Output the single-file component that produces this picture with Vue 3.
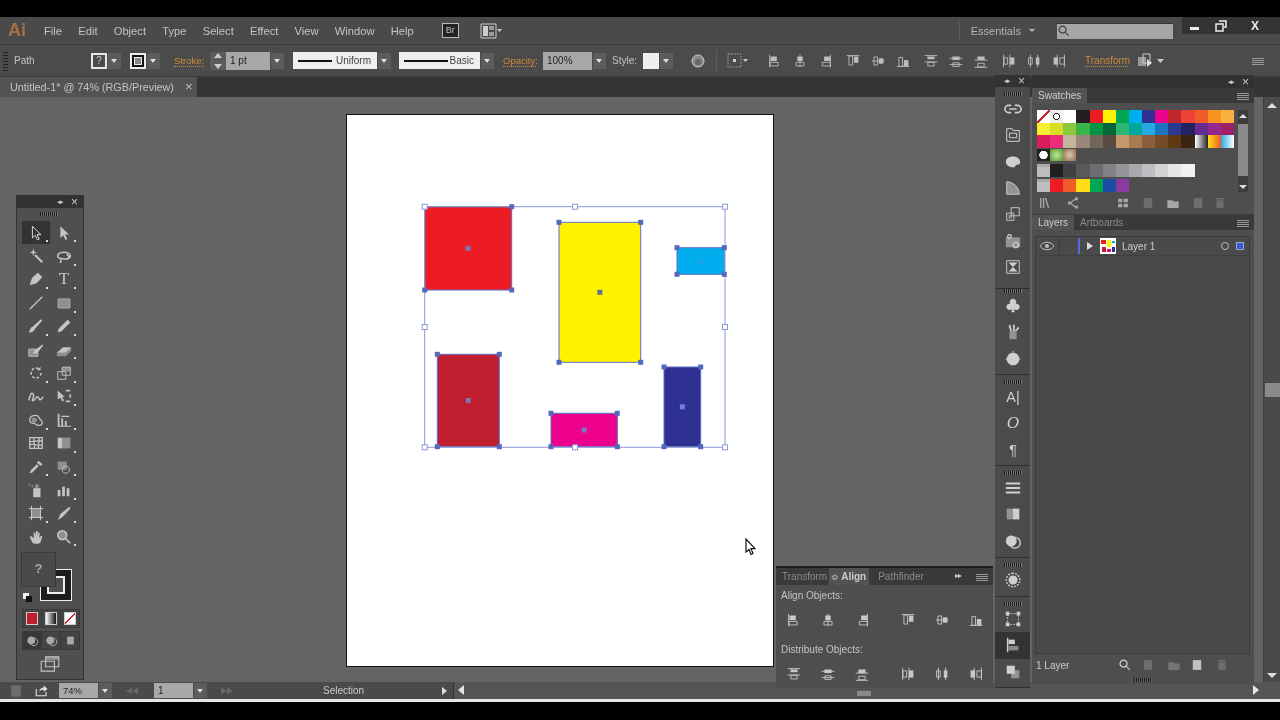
<script setup>
import { h } from 'vue'

const icons = {
  sel: { s: 'M6 2.5v13l3.2-3 2.4 5.2 2-.9-2.4-5h4.3z' },
  direct: { f: 'M6 2.5v13l3.2-3 2.4 5.2 2-.9-2.4-5h4.3z' },
  wand: { f: 'M7 2l1 3 3 1-3 1-1 3-1-3-3-1 3-1z', s: 'M9 9l8 8', w: 2.4 },
  lasso: { s: 'M3 10c0-5 14-6 14 0 0 3-5 4-8 3M3 10c0 2 3 3 6 3M7 13l-1 5M13 8l3 3-3 3', w: 1.7 },
  pen: { f: 'M3 17l2.5-8L12 3l5 5-6 6.5z', f2: 'M9 7l4 4-2 1-3-3z' },
  type: { t: 'T', tf: 'Liberation Serif', ts: 19 },
  line: { s: 'M3 17L17 3', w: 1.4 },
  rect: { s: 'M3.5 5.5h13v10h-13z', f2: 'M4 6h12v9H4z' },
  brush: { f: 'M2 17c3 .5 6-1 7-4l8-9-1.5-1.5-9 8c-3 1-3 4-4.500 6.500z' },
  pencil: { f: 'M3 17l1-4L14 3l3 3L7 16z', f2: 'M14 3l3 3-1 1-3-3z' },
  blob: { f2: 'M2 9h10v8H2z', s: 'M2 9h10v8H2z', f: 'M6 14l2-3 9-7 1 1-7 9z' },
  eraser: { f: 'M2 13l7-6h9l-6 6z', f2: 'M2 13h10v4H2zM12 13l6-6v4l-6 6z' },
  rotate: { s: 'M15.500 10a5.500 5.500 0 1 1-2-4.200', d: '3 2', w: 1.7, f: 'M15 3v4h-4z' },
  scale: { s: 'M3 8.500h9v8.500H3zM8 3.500h9v9H8z', f2: 'M8 3.500h9v5h-9z' },
  width: { s: 'M2 15c2-7 3-10 5-7s-3 8 0 7 3-5 5-4 1 4 3 3 2-3 3-3', w: 1.7 },
  free: { f: 'M3 4v10l3-2 2 4 2-1-2-4h3z', s: 'M12 4h5M17 8v4M12 16h5', w: 1.8 },
  shape: { s: 'M3 10c0-6 9-6 10-3s4 3 4 6-5 4-7 2-7 0-7-5z', w: 1.4, f2: 'M5 10c0-3 5-3 6-1s-1 4-3 4-3-1-3-3z' },
  chart: { f: 'M3 3h2v14H3zM7 8h2v9H7zM11 11h2v6h-2z', s: 'M3 17h15M7 6h9', w: 1.2 },
  mesh: { s: 'M3 4h14v12H3zM3 8c4 2 9-2 14 0M3 12c4-2 9 2 14 0M8 4c-2 4 2 8 0 12M13 4c2 4-2 8 0 12', w: 1.4 },
  grad: { f: 'M3 4h5v12H3z', f2: 'M8 4h9v12H8z' },
  drop: { f: 'M3 17l1-3 7-7 2 2-7 7zM11 5l2-2 4 4-2 2z' },
  blend: { s: 'M12 9a4 4 0 1 0 .100 0z', f2: 'M3 4h10v9H3z' },
  spray: { f: 'M7 8h8v10H7z', f2: 'M9 4h4v4H9zM2 3h2v2H2zM5 5h2v2H5z' },
  bars: { f: 'M3 10h3v7H3zM8 6h3v11H8zM13 8h3v9h-3z' },
  crop: { s: 'M5 2v16M15 2v16M2 5h16M2 15h16', w: 1.2, f2: 'M5 5h10v10H5z' },
  slice: { f: 'M3 18l3-7 10-8 1 2-8 9z' },
  hand: { f: 'M5 9l-2 1 3 6c1 2 8 2 9 0l2-7-2 0-1 3V5h-1.500l-.500 5V3.500h-2L9 10V5H7.500v7z' },
  zoom: { f2: 'M8 3a5 5 0 1 0 .100 0z', s: 'M11.500 11.500L17 17M8 3a5 5 0 1 0 .100 0z', w: 1.8 },
  screen: { s: 'M6 3.500h12v9H6zM2 7.500h12v9H2z', f2: 'M6 3.500h12v3H6z' },
  link: { s: 'M8 6H5a4 4 0 0 0 0 8h3M12 6h3a4 4 0 0 1 0 8h-3M6 10h8', w: 1.8 },
  folder: { s: 'M3 3h6l1 2h7v12H3zM6 8h8v5H6z', w: 1.1 },
  palette: { f: 'M10 4c5 0 8 2.500 8 6s-3 3-4 3-1 3-4 3-8-2-8-6 4-6 8-6z' },
  curve: { f2: 'M3 17V3c7 0 14 6 14 14z', s: 'M3 17V3c7 0 14 6 14 14z' },
  trans: { s: 'M8 3h9v9H8zM3 9h8v8H3z', f2: 'M5 11h4v4H5z' },
  camera: { f2: 'M2 6h16v11H2z', s: 'M13 11.500a3 3 0 1 0 .100 0zM6 3a2 2 0 1 0 .100 0z', w: 1.4 },
  frame: { s: 'M3 3h14v14H3z', f: 'M5 5h10l-5 5zM5 15h10l-5-5z' },
  club: { f: 'M10 2a3.500 3.500 0 0 1 3 5.500 3.500 3.500 0 1 1-2 5.500l1 4H8l1-4a3.500 3.500 0 1 1-2-5.500A3.500 3.500 0 0 1 10 2z' },
  jar: { f2: 'M6 9h8v9H6z', f: 'M7 9L5 3l2-1 2 7zM10 9V2h2v7zM12 9l4-5 1 2-3 3z' },
  sphere: { f: 'M10 3a7 7 0 1 0 .100 0z', f2: 'M2 9h2v2H2zM16 9h2v2h-2zM9 1h2v2H9z' },
  charA: { t: 'A|', tf: 'Liberation Sans', ts: 16 },
  charO: { t: 'O', tf: 'Liberation Serif', ts: 19, ti: true },
  para: { t: '¶', tf: 'Liberation Sans', ts: 16 },
  lines: { f: 'M2 4h16v2H2zM2 9h16v2H2zM2 14h16v2H2z' },
  gradp: { f: 'M10 4h7v12h-7z', f2: 'M3 4h7v12H3z' },
  blobs: { f: 'M8 4a6 6 0 1 0 .100 0z', s: 'M12 6a6 6 0 1 0 .100 0z', w: 1.5 },
  dots: { s: 'M10 2.500a7.500 7.500 0 1 0 .100 0z', d: '2 1.500', w: 1.6, f: 'M10 5a5 5 0 1 0 .100 0z' },
  board: { s: 'M4 4h12v12H4z', f: 'M2 2h4v4H2zM14 2h4v4h-4zM2 14h4v4H2zM14 14h4v4h-4z', d: '2 1.500' },
  alignp: { s: 'M4 2v16', w: 1.6, f: 'M5 4h7v5H5z', f2: 'M5 11h11v5H5z' },
  path: { f: 'M3 3h9v9H3z', f2: 'M8 8h9v9H8z' },
  alL: { s: 'M4 3v14M4.500 11.500h9v4h-9z', f: 'M5 5h7v5H5z' },
  alC: { s: 'M10 3v14M5.500 11.500h9v4h-9z', f: 'M7 5h6v5H7z' },
  alR: { s: 'M16 3v14M7 11.500h9v4H7z', f: 'M9 5h7v5H9z' },
  alT: { s: 'M3 4h14M5.500 4.500h4v10h-4z', f: 'M11 5h5v7h-5z' },
  alM: { s: 'M3 10h14M5.500 5.500h4v9h-4z', f: 'M11 7h5v6h-5z' },
  alB: { s: 'M3 16h14M5.500 6h4v10h-4z', f: 'M11 9h5v7h-5z' },
  diT: { s: 'M3 4h14M3 11h14M6.500 11.500h7v4h-7z', f: 'M6 5h8v3H6z' },
  diM: { s: 'M3 7h14M3 14h14M6.500 12h7v4h-7z', f: 'M6 5h8v4H6z' },
  diB: { s: 'M3 9h14M3 17h14M6.500 12.500h7v4h-7z', f: 'M6 5h8v4H6z' },
  dhL: { s: 'M4 3v14M11 3v14M4.500 6.500h4v7h-4z', f: 'M11 6h5v8h-5z' },
  dhC: { s: 'M6 3v14M14 3v14M4 6.500h4v7H4z', f: 'M12 6h4v8h-4z' },
  dhR: { s: 'M8 3v14M16 3v14M11 6.500h5v7h-5z', f: 'M4 6h5v8H4z' },
  search: { s: 'M8 3a5 5 0 1 1-.100 0zM11.500 11.500L17 17', w: 1.6 },
  page: { f: 'M4 3h12v14H4z' },
  trash: { f: 'M5 6h10v11H5zM4 3h12v2H4z' },
  loc: { f: 'M2 6h7l2 2h7v9H2z' },
  libs: { f: 'M3 3h2v14H3zM7 3h2v14H7z', s: 'M11 3l4 14', w: 2 },
  share: { s: 'M14 4l-8 6 8 6', w: 1.6, f: 'M3 8h4v4H3zM13 2h4v4h-4zM13 14h4v4h-4z' },
  grid4: { f: 'M3 4h6v5H3zM11 4h6v5h-6zM3 11h6v5H3zM11 11h6v5h-6z' },
  export: { s: 'M3 8v9h13v-5', w: 1.5, f: 'M7 12c0-4 3-6 6-6V3l5 5-5 4V9c-3 0-5 1-6 3z' }
}

const Ico = (props) => {
  const ic = icons[props.name]
  const size = props.size || 20
  const parts = []
  if (ic.f2) parts.push(h('path', { d: ic.f2, fill: 'currentColor', opacity: 0.55 }))
  if (ic.f) parts.push(h('path', { d: ic.f, fill: 'currentColor' }))
  if (ic.s) parts.push(h('path', { d: ic.s, fill: 'none', stroke: 'currentColor', 'stroke-width': ic.w || 1, 'stroke-dasharray': ic.d }))
  if (ic.t) {
    parts.push(h('text', {
      x: 10, y: 16, 'text-anchor': 'middle', fill: 'currentColor',
      'font-family': ic.tf, 'font-size': ic.ts, 'font-style': ic.ti ? 'italic' : 'normal'
    }, ic.t))
  }
  return h('svg', { viewBox: '0 0 20 20', width: size, height: size }, parts)
}
Ico.props = ['name', 'size']

const menus = ['File', 'Edit', 'Object', 'Type', 'Select', 'Effect', 'View', 'Window', 'Help']

const alignBar = [
  ['alL', 'alC', 'alR'],
  ['alT', 'alM', 'alB'],
  ['diT', 'diM', 'diB'],
  ['dhL', 'dhC', 'dhR']
]

const tools = [
  'sel', 'direct', 'wand', 'lasso', 'pen', 'type', 'line', 'rect', 'brush', 'pencil', 'blob', 'eraser',
  'rotate', 'scale', 'width', 'free', 'shape', 'chart', 'mesh', 'grad', 'drop', 'blend', 'spray', 'bars',
  'crop', 'slice', 'hand', 'zoom'
]

const dockGroups = [
  ['link', 'folder', 'palette', 'curve', 'trans', 'camera', 'frame'],
  ['club', 'jar', 'sphere'],
  ['charA', 'charO', 'para'],
  ['lines', 'gradp', 'blobs'],
  ['dots'],
  ['board', 'alignp', 'path']
]

const swatchRows = [
  ['none', 'reg', '#ffffff', '#231f20', '#ed1c24', '#fff200', '#00a651', '#00aeef', '#2e3192', '#ec008c', '#c1272d', '#ef4136', '#f15a29', '#f7941d', '#fbb040'],
  ['#f9ed32', '#d7df23', '#8dc63f', '#39b54a', '#009444', '#006838', '#2bb673', '#00a79d', '#27aae1', '#1c75bc', '#2b3990', '#262262', '#662d91', '#92278f', '#9e1f63'],
  ['#da1c5c', '#ee2a7b', '#c2b59b', '#9b8579', '#726658', '#594a42', '#c49a6c', '#a97c50', '#8b5e3c', '#754c29', '#603913', '#3c2415', 'linear-gradient(90deg,#fff,#222)', 'linear-gradient(90deg,#ffde17,#f15a29)', 'linear-gradient(90deg,#27aae1,#fff)'],
  ['radial-gradient(circle,#fff 45%,#222 50%)', 'radial-gradient(circle,#c8e6a0,#4c9a2a)', 'radial-gradient(circle,#e0c8b0,#8a6a50)'],
  ['folder', '#231f20', '#414042', '#58595b', '#6d6e71', '#808285', '#939598', '#a7a9ac', '#bcbec0', '#d1d3d4', '#e6e7e8', '#f1f2f2'],
  ['folder', '#ed1c24', '#f15a29', '#ffde17', '#00a651', '#1c4da1', '#8a3b9f']
]

const swatchFoot = ['libs', 'share', 'grid4', 'page', 'loc', 'page', 'trash']
const layerFoot = ['search', 'page', 'loc', 'page', 'trash']

const shapes = [
  { x: 424.7, y: 206.7, w: 87, h: 83.3, c: '#ed1c24', dot: '#7c74b4' },
  { x: 559, y: 222.3, w: 81.7, h: 140, c: '#fff200', dot: '#5f6f9c' },
  { x: 677, y: 247.7, w: 47.3, h: 26.6, c: '#00aeef', dot: '#1ea4e6' },
  { x: 437.3, y: 354.3, w: 62, h: 92.4, c: '#be1e2d', dot: '#7c74b4' },
  { x: 551, y: 413.3, w: 66.3, h: 33.4, c: '#ec008c', dot: '#7c74c4' },
  { x: 664, y: 367, w: 36.7, h: 79.7, c: '#2e3192', dot: '#6f80d8' }
]

const handles = [
  [424.7, 206.7], [575, 206.7], [725, 206.7], [424.7, 327], [725, 327], [424.7, 447.3], [575, 447.3], [725, 447.3]
]

const corners = (s) => [[s.x, s.y], [s.x + s.w, s.y], [s.x, s.y + s.h], [s.x + s.w, s.y + s.h]]
</script>

<template>
  <div class="screen">
    <div class="blackbar"></div>

    <header class="menubar">
      <span class="ai-logo">Ai</span>
      <nav class="menus">
        <span v-for="m in menus" :key="m">{{ m }}</span>
      </nav>
      <span class="br-box">Br</span>
      <svg class="arrange" width="22" height="16" viewBox="0 0 22 16">
        <path d="M1 1h15v14H1z" fill="none" stroke="#ccc" />
        <path d="M3 3h5v10H3z" fill="#ccc" /><path d="M9 3h5v4H9zM9 9h5v4H9z" fill="#999" />
        <path d="M17 6h5l-2.500 3z" fill="#ccc" />
      </svg>
      <span class="bar-sep"></span>
      <span class="essentials">Essentials</span>
      <span class="tri-sm"></span>
      <div class="searchbox"><Ico name="search" :size="14" /></div>
      <div class="winctl">
        <span class="win-min"></span>
        <svg width="12" height="12" viewBox="0 0 12 12"><path d="M4 1h7v6H9M1 4h7v7H1z" fill="none" stroke="#eee" stroke-width="1.500" /></svg>
        <span class="win-x">X</span>
      </div>
    </header>

    <div class="controlbar">
      <span class="grip-v"></span>
      <span class="path-label">Path</span>
      <span class="fill-box">?</span><span class="drop"></span>
      <span class="stroke-box"><i></i></span><span class="drop"></span>
      <span class="link-label stroke-label">Stroke:</span>
      <span class="spinner"></span>
      <span class="input w43">1 pt</span><span class="drop"></span>
      <span class="line-sel uniform"><i></i>Uniform</span><span class="drop"></span>
      <span class="line-sel basic"><i></i>Basic</span><span class="drop"></span>
      <span class="link-label opacity-label">Opacity:</span>
      <span class="input w49">100%</span><span class="drop"></span>
      <span class="style-label">Style:</span>
      <span class="style-box"></span><span class="drop"></span>
      <svg class="globe" width="14" height="14" viewBox="0 0 14 14"><circle cx="7" cy="7" r="6" fill="#8a8a8a" stroke="#ccc" /><circle cx="7" cy="8" r="3" fill="#666" /></svg>
      <span class="bar-sep tall"></span>
      <svg class="refpt" width="22" height="16" viewBox="0 0 22 16"><path d="M1 1h13v13H1z" fill="none" stroke="#aaa" stroke-dasharray="1.500 1.500" /><path d="M6 6h3v3H6z" fill="#ccc" /><path d="M16 6h5l-2.500 3z" fill="#ccc" /></svg>
      <div class="align-groups">
        <div v-for="(g, i) in alignBar" :key="i" class="align-group">
          <Ico v-for="n in g" :key="n" :name="n" :size="18" />
        </div>
      </div>
      <span class="link-label transform-label">Transform</span>
      <svg class="isolate" width="28" height="16" viewBox="0 0 28 16"><path d="M1 4h8v9H1z" fill="#999" /><path d="M6 1h7v9H6z" fill="none" stroke="#ccc" /><path d="M10 6l5 4-5 4z" fill="#ddd" /><path d="M20 6h7l-3.500 4z" fill="#ccc" /></svg>
      <span class="panel-menu ctl-menu"></span>
    </div>

    <div class="tabbar">
      <div class="doc-tab">Untitled-1* @ 74% (RGB/Preview) <span class="tab-x">×</span></div>
    </div>

    <main class="workspace">
      <div class="canvas">
        <div class="artboard">
          <svg class="art" width="426" height="551" viewBox="347 115 426 551">
            <rect v-for="s in shapes" :key="s.c" :x="s.x" :y="s.y" :width="s.w" :height="s.h" :fill="s.c" stroke="#5b6ec4" stroke-width="1" />
            <rect x="424.700" y="206.700" width="300.300" height="240.600" fill="none" stroke="#8c9ad8" stroke-width="1" />
            <g v-for="s in shapes" :key="'p' + s.c" fill="#5468bc">
              <rect v-for="(p, i) in corners(s)" :key="i" :x="p[0] - 2.500" :y="p[1] - 2.500" width="5" height="5" />
              <rect :x="s.x + s.w / 2 - 2.500" :y="s.y + s.h / 2 - 2.500" width="5" height="5" :fill="s.dot" />
            </g>
            <rect v-for="(p, i) in handles" :key="'h' + i" :x="p[0] - 2.500" :y="p[1] - 2.500" width="5" height="5" fill="#fff" stroke="#8c9ad8" />
            <path d="M746 539v13l3-2.500 2 5 2-1-2-4.800h4z" fill="#fff" stroke="#111" stroke-width="1.200" />
          </svg>
        </div>
      </div>
      <div class="vscroll">
        <span class="arr-up"></span>
        <span class="vthumb"></span>
        <span class="arr-down"></span>
      </div>
    </main>

    <footer class="statusbar">
      <Ico class="st-dim first" name="page" :size="16" />
      <Ico class="st-light" name="export" :size="15" />
      <span class="input zoomval">74%</span><span class="drop st-drop"></span>
      <span class="nav-dim">◀◀</span>
      <span class="input pageval">1</span><span class="drop st-drop"></span>
      <span class="nav-dim">▶▶</span>
      <span class="st-mode">Selection</span>
      <span class="st-arrow"></span>
      <div class="hscroll">
        <span class="arr-left"></span>
        <span class="hthumb"></span>
        <span class="arr-right"></span>
      </div>
    </footer>
    <div class="whiteline"></div>

    <!-- floating panels -->
    <aside class="toolpanel">
      <div class="ph"><span class="ph-arrows">◂▸</span><span class="ph-x">×</span></div>
      <span class="grip"></span>
      <div class="toolgrid">
        <div v-for="(t, i) in tools" :key="t" class="tool" :class="{ active: i === 0, corner: i % 2 === 1 || i % 4 === 0 }">
          <Ico :name="t" :size="18" />
        </div>
      </div>
      <div class="colors">
        <div class="stroke-big"><i></i></div>
        <div class="fill-big">?</div>
        <div class="mini-default"><i></i><b></b></div>
      </div>
      <div class="btnrow">
        <span class="cbtn"><i class="c-red"></i></span>
        <span class="cbtn"><i class="c-grad"></i></span>
        <span class="cbtn"><i class="c-none"></i></span>
      </div>
      <div class="btnrow draw">
        <span class="cbtn dark"><Ico name="blobs" :size="13" /></span>
        <span class="cbtn"><Ico name="blobs" :size="13" /></span>
        <span class="cbtn"><Ico name="page" :size="11" /></span>
      </div>
      <div class="screenmode"><Ico name="screen" :size="22" /></div>
    </aside>

    <aside class="dock">
      <div class="ph"><span class="ph-arrows">◂▸</span><span class="ph-x">×</span></div>
      <div v-for="(g, i) in dockGroups" :key="i" class="dock-group" :class="'dg' + i">
        <span class="grip"></span>
        <div v-for="n in g" :key="n" class="dock-item" :class="{ on: n === 'alignp' }">
          <Ico :name="n" :size="18" />
        </div>
      </div>
    </aside>

    <aside class="rightpanel">
      <div class="ph"><span class="ph-arrows">◂▸</span><span class="ph-x">×</span></div>
      <div class="tabs">
        <span class="tab on">Swatches</span>
        <span class="panel-menu"></span>
      </div>
      <div class="swatch-body">
        <div class="swatches">
          <div v-for="(row, r) in swatchRows" :key="r" class="sw-row" :class="'r' + r">
            <span v-for="(c, i) in row" :key="i" class="sw" :class="{ none: c === 'none', reg: c === 'reg', folder: c === 'folder' }" :style="c.length > 6 || c[0] === '#' ? { background: c === 'folder' ? '' : c } : {}"></span>
          </div>
        </div>
        <div class="sw-scroll">
          <span class="arr-up sm"></span>
          <span class="sw-thumb"></span>
          <span class="arr-down sm"></span>
        </div>
      </div>
      <div class="panel-foot swfoot">
        <Ico v-for="(n, i) in swatchFoot" :key="i" :class="'sf' + i" :name="n" :size="14" />
      </div>
      <div class="tabs layers-tabs">
        <span class="tab on">Layers</span>
        <span class="tab dim">Artboards</span>
        <span class="panel-menu"></span>
      </div>
      <div class="layers">
        <div class="layer-row">
          <svg class="eye" width="16" height="10" viewBox="0 0 16 10"><path d="M1 5c3-5 11-5 14 0-3 5-11 5-14 0z" fill="none" stroke="#bbb" /><circle cx="8" cy="5" r="2" fill="#bbb" /></svg>
          <span class="lsep"></span>
          <span class="layer-color"></span>
          <span class="tri-right"></span>
          <svg class="layer-thumb" width="16" height="16" viewBox="0 0 16 16">
            <rect width="16" height="16" fill="#fff" />
            <rect x="1" y="2" width="5" height="4" fill="#ed1c24" /><rect x="7" y="2" width="4" height="7" fill="#fff200" /><rect x="12" y="3" width="3" height="2" fill="#00aeef" />
            <rect x="2" y="9" width="4" height="5" fill="#be1e2d" /><rect x="7" y="11" width="4" height="3" fill="#ec008c" /><rect x="12" y="9" width="3" height="5" fill="#2e3192" />
          </svg>
          <span class="layer-name">Layer 1</span>
          <span class="target"></span>
          <span class="sel-sq"></span>
        </div>
      </div>
      <div class="panel-foot layfoot">
        <span class="lcount">1 Layer</span>
        <Ico v-for="(n, i) in layerFoot" :key="i" :class="'lf' + i" :name="n" :size="14" />
      </div>
      <span class="grip bottom"></span>
    </aside>

    <aside class="alignpanel">
      <div class="tabs align-tabs">
        <span class="tab dim">Transform</span>
        <span class="tab on"><em>≎</em>Align</span>
        <span class="tab dim pf">Pathfinder</span>
        <span class="more">▸▸</span>
        <span class="panel-menu"></span>
      </div>
      <div class="al-title">Align Objects:</div>
      <div class="al-row">
        <div class="al-g"><Ico v-for="n in alignBar[0]" :key="n" :name="n" :size="18" /></div>
        <div class="al-g"><Ico v-for="n in alignBar[1]" :key="n" :name="n" :size="18" /></div>
      </div>
      <div class="al-title second">Distribute Objects:</div>
      <div class="al-row">
        <div class="al-g"><Ico v-for="n in alignBar[2]" :key="n" :name="n" :size="18" /></div>
        <div class="al-g"><Ico v-for="n in alignBar[3]" :key="n" :name="n" :size="18" /></div>
      </div>
    </aside>
  </div>
</template>

<style>
html, body { margin: 0; background: #000; }
</style>

<style scoped>
.screen {
  position: relative;
  width: 1280px;
  height: 720px;
  overflow: hidden;
  background: #000;
  font-family: "Liberation Sans", Arial, sans-serif;
  font-size: 10px;
  color: #c4c4c4;
  filter: blur(0.45px);
}
.blackbar { height: 17px; }

/* menu bar */
.menubar {
  height: 28px;
  box-sizing: border-box;
  display: flex;
  align-items: center;
  background: #4a4a4a;
  border-bottom: 1px solid #3a3a3a;
  position: relative;
}
.ai-logo { margin-left: 8px; width: 28px; font: bold 18px "Liberation Sans", sans-serif; color: #a8703f; }
.menus { display: flex; gap: 16.2px; margin-left: 8px; font-size: 11.2px; color: #c4c4c4; }
.br-box { margin-left: 28px; width: 15px; height: 13px; border: 1px solid #bbb; background: #222; font-size: 9px; line-height: 13px; text-align: center; }
.arrange { margin-left: 21px; }
.bar-sep { width: 1px; height: 18px; background: #5e5e5e; margin-left: 457px; }
.essentials { margin-left: 11px; font-size: 11px; color: #b4b4b4; }
.tri-sm { margin-left: 8px; border: 3px solid transparent; border-top: 3px solid #bbb; margin-top: 3px; }
.searchbox {
  margin-left: 22px;
  width: 116px;
  height: 16px;
  background: #a6a6a6;
  color: #444;
  display: flex;
  align-items: center;
  border-top: 1px solid #333;
  box-sizing: border-box;
}
.winctl {
  position: absolute;
  top: 0;
  right: 0;
  width: 98px;
  height: 17px;
  background: #333;
  display: flex;
  align-items: center;
  box-sizing: border-box;
  padding-left: 8px;
}
.win-min { width: 9px; height: 3px; background: #eee; margin-top: 6px; margin-right: 16px; }
.win-x { margin-left: 24px; font: bold 12px "Liberation Sans", sans-serif; color: #eee; }

/* control bar */
.controlbar {
  height: 32px;
  box-sizing: border-box;
  display: flex;
  align-items: center;
  background: #4b4b4b;
  border-bottom: 1px solid #3c3c3c;
  position: relative;
}
.grip-v { width: 5px; height: 20px; margin-left: 3px; background: repeating-linear-gradient(0deg, #222 0 1px, transparent 1px 3px); }
.path-label { margin-left: 6px; width: 77px; }
.fill-box {
  width: 16px; height: 16px; box-sizing: border-box;
  border: 2px solid #e8e8e8; background: #4b4b4b;
  text-align: center; line-height: 12px; font-size: 10px;
}
.drop {
  position: relative;
  width: 13px; height: 16px;
  margin-left: 1px;
  background: #5c5c5c;
  flex: none;
}
.drop::after {
  content: "";
  position: absolute;
  left: 3px; top: 6px;
  border: 3.5px solid transparent;
  border-top: 4px solid #ddd;
}
.stroke-box { width: 16px; height: 16px; box-sizing: border-box; margin-left: 9px; border: 2px solid #eee; background: #111; display: flex; align-items: center; justify-content: center; }
.stroke-box i { width: 6px; height: 6px; border: 1px solid #eee; background: #888; }
.link-label { color: #c98a3a; border-bottom: 1px dotted #c98a3a; line-height: 11px; }
.stroke-label { margin-left: 14px; width: 30px; font-size: 9.5px; }
.spinner { position: relative; margin-left: 6px; width: 16px; height: 18px; background: #5c5c5c; }
.spinner::before, .spinner::after { content: ""; position: absolute; left: 4px; border: 4px solid transparent; }
.spinner::before { top: 1px; border-top: 0; border-bottom: 5px solid #ccc; }
.spinner::after { bottom: 1px; border-bottom: 0; border-top: 5px solid #ccc; }
.input { background: #a8a8a8; color: #222; height: 18px; line-height: 18px; padding-left: 4px; box-sizing: border-box; }
.w43 { width: 44px; }
.w49 { width: 49px; margin-left: 7px; }
.line-sel {
  height: 17px;
  background: #efefef;
  color: #444;
  display: flex;
  align-items: center;
  justify-content: space-between;
  padding: 0 6px 0 5px;
  box-sizing: border-box;
}
.line-sel i { height: 2px; background: #111; }
.uniform { width: 84px; margin-left: 9px; }
.uniform i { width: 34px; }
.basic { width: 81px; margin-left: 8px; }
.basic i { width: 44px; }
.opacity-label { margin-left: 9px; width: 33px; font-size: 9.5px; }
.style-label { margin-left: 6px; width: 31px; }
.style-box { width: 16px; height: 16px; background: #eee; }
.globe { margin-left: 18px; }
.bar-sep.tall { margin-left: 11px; height: 22px; }
.refpt { margin-left: 10px; }
.align-groups { margin-left: 17px; display: flex; gap: 10px; color: #bdbdbd; }
.align-group { display: flex; gap: 7px; }
.transform-label { margin-left: 17px; width: 43px; font-size: 10px; }
.isolate { margin-left: 9px; }
.panel-menu {
  position: relative;
  width: 12px;
  height: 8px;
  margin-left: auto;
  background: repeating-linear-gradient(0deg, #999 0 1px, transparent 1px 2px);
}
.ctl-menu { margin-right: 16px; }

/* tab bar */
.tabbar { height: 20px; background: #353535; display: flex; }
.doc-tab {
  width: 197px;
  box-sizing: border-box;
  padding-left: 10px;
  background: #535353;
  font-size: 10.8px;
  line-height: 20px;
  color: #c4c4c4;
  white-space: nowrap;
}
.tab-x { margin-left: 8px; font-size: 13px; }

/* workspace */
.workspace { height: 585px; display: flex; background: #646464; }
.canvas { flex: 1; position: relative; }
.artboard {
  position: absolute;
  left: 347px;
  top: 18px;
  width: 426px;
  height: 551px;
  background: #fff;
  outline: 1px solid #111;
}
.art { display: block; }
.vscroll {
  width: 16px;
  background: #4a4a4a;
  position: relative;
  border-left: 1px solid #3e3e3e;
}
.arr-up, .arr-down, .arr-left, .arr-right { position: absolute; border: 5px solid transparent; }
.arr-up { left: 3px; top: 6px; border-bottom: 5px solid #ddd; border-top: 0; }
.arr-down { left: 3px; bottom: 4px; border-top: 5px solid #ddd; border-bottom: 0; }
.vthumb { position: absolute; left: 1px; right: 0; top: 286px; height: 14px; background: #8a8a8a; }

/* status bar */
.statusbar {
  height: 17px;
  display: flex;
  align-items: center;
  background: #4a4a4a;
  position: relative;
}
.st-dim { color: #6c6c6c; }
.first { margin-left: 8px; }
.st-light { color: #ddd; margin-left: 10px; }
.zoomval { width: 39px; height: 15px; line-height: 15px; margin-left: 10px; font-size: 9.5px; }
.st-drop { height: 15px; margin-left: 1px; }
.nav-dim { margin-left: 14px; width: 28px; color: #6a6a6a; font-size: 8px; }
.pageval { width: 39px; height: 15px; line-height: 15px; margin-left: 0; }
.st-mode { margin-left: 74px; width: 119px; font-size: 10px; color: #c8c8c8; }
.st-arrow { border: 4px solid transparent; border-left: 5px solid #ddd; }
.hscroll { position: absolute; left: 453px; right: 0; top: 0; bottom: 0; background: #555; border-left: 1px solid #333; }
.arr-left { left: 4px; top: 3px; border-right: 6px solid #e4e4e4; border-left: 0; }
.arr-right { right: 21px; top: 3px; border-left: 6px solid #e4e4e4; border-right: 0; }
.hthumb { position: absolute; left: 403px; width: 14px; top: 9px; height: 5px; background: #8a8a8a; }
.whiteline { height: 3px; background: #e6e6e6; }

/* shared panel bits */
.ph {
  height: 12px;
  background: #323232;
  display: flex;
  justify-content: flex-end;
  align-items: center;
  gap: 8px;
  padding-right: 5px;
  font-size: 9px;
  line-height: 12px;
  color: #c8c8c8;
}
.ph-arrows { font-size: 7px; letter-spacing: -1px; }
.ph-x { font-size: 12px; }
.grip {
  display: block;
  width: 18px;
  height: 4px;
  margin: 0 auto;
  background: repeating-linear-gradient(90deg, #181818 0 1px, #777 1px 2px);
}
.tabs { display: flex; align-items: stretch; background: #393939; height: 15px; position: relative; }
.tab { padding: 0 6px; line-height: 15px; font-size: 10px; background: #393939; }
.tab.on { background: #535353; color: #cccccc; }
.tab.dim { color: #8c8c8c; }

/* tools */
.toolpanel {
  position: absolute;
  left: 16px;
  top: 195px;
  width: 68px;
  height: 485px;
  box-sizing: border-box;
  background: #4f4f4f;
  border: 1px solid #333;
}
.toolpanel > .grip { margin-top: 4px; margin-left: 23px; }
.toolgrid {
  display: grid;
  grid-template-columns: 28px 28px;
  grid-auto-rows: 23.4px;
  margin: 5px 0 0 5px;
}
.tool { position: relative; display: flex; align-items: center; justify-content: center; color: #c4c4c4; }
.tool.active { background: #333; color: #e8e8e8; }
.tool.corner::after {
  content: "";
  position: absolute;
  right: 2px;
  bottom: 2px;
  width: 2px;
  height: 2px;
  background: #ddd;
}
.colors { position: relative; height: 50px; margin-top: 5px; }
.stroke-big {
  position: absolute;
  left: 23px;
  top: 16px;
  width: 32px;
  height: 32px;
  box-sizing: border-box;
  background: #1d1d1d;
  border: 1px solid #eee;
  display: flex;
  align-items: center;
  justify-content: center;
}
.stroke-big i { width: 14px; height: 14px; border: 2px solid #eee; background: #4f4f4f; }
.fill-big {
  position: absolute;
  left: 5px;
  top: 0;
  width: 33px;
  height: 33px;
  background: #4a4a4a;
  outline: 1px solid #3a3a3a;
  text-align: center;
  line-height: 32px;
  font-size: 13px;
  font-weight: bold;
  color: #aaa;
}
.mini-default { position: absolute; left: 6px; top: 40px; width: 10px; height: 10px; }
.mini-default i { position: absolute; left: 0; top: 0; width: 6px; height: 6px; background: #eee; }
.mini-default b { position: absolute; left: 3px; top: 3px; width: 6px; height: 6px; background: #111; }
.btnrow { display: flex; gap: 1px; margin: 7px 0 0 6px; width: 56px; }
.btnrow.draw { margin-top: 5px; }
.cbtn {
  width: 18px;
  height: 17px;
  background: #444;
  outline: 1px solid #3a3a3a;
  display: flex;
  align-items: center;
  justify-content: center;
  color: #aaa;
}
.cbtn.dark { background: #383838; }
.cbtn i { display: block; width: 10px; height: 11px; border: 1px solid #ccc; }
.c-red { background: #be1e2d; }
.c-grad { background: linear-gradient(90deg, #fff, #111); }
.c-none { background: linear-gradient(135deg, #fff 44%, #d0202c 44% 56%, #fff 56%); }
.screenmode { display: flex; justify-content: center; color: #c4c4c4; margin-top: 4px; }

/* dock */
.dock {
  position: absolute;
  left: 995px;
  top: 75px;
  width: 35px;
  height: 613px;
  background: #4b4b4b;
}
.dock-group { border-bottom: 1px solid #2f2f2f; box-sizing: border-box; padding-top: 5px; }
.dock-item { height: 26.300px; display: flex; align-items: center; justify-content: center; color: #cfcfcf; }
.dock-item.on { background: #333; }
.dg0 { height: 202px; }
.dg1 { height: 86px; padding-top: 0; }
.dg2 { height: 91px; }
.dg3 { height: 92px; }
.dg4 { height: 39px; }
.dg5 { height: 91px; }

/* right panels */
.rightpanel {
  position: absolute;
  left: 1032px;
  top: 75px;
  width: 222px;
  height: 609px;
  background: #4e4e4e;
}
.rightpanel > .ph { height: 13px; }
.rightpanel .panel-menu { position: absolute; right: 5px; top: 4px; }
.swatch-body { display: flex; height: 94px; box-sizing: border-box; padding: 7px 6px 0 5px; justify-content: space-between; }
.sw-row { display: flex; height: 12.700px; }
.sw-row.r3 { height: 12px; margin-top: 1px; }
.sw-row.r4 { margin-top: 3px; }
.sw-row.r5 { margin-top: 2.300px; }
.sw { display: block; width: 13.130px; height: 100%; flex: none; }
.sw.none { background: linear-gradient(135deg, #fff 44%, #c8202c 44% 56%, #fff 56%); }
.sw.reg { background: radial-gradient(circle, #fff 25%, #222 28% 36%, #eee 40%); }
.sw.folder { background: linear-gradient(#aaa 0 3px, #bdbdbd 3px); }
.sw-scroll { width: 10px; height: 82px; background: #3d3d3d; position: relative; }
.sw-thumb { position: absolute; left: 0; right: 0; top: 14px; height: 52px; background: #8a8a8a; }
.arr-up.sm { left: 1px; top: 4px; border-width: 4px; border-top: 0; border-bottom: 4px solid #ddd; }
.arr-down.sm { left: 1px; bottom: 3px; border-width: 4px; border-bottom: 0; border-top: 4px solid #ddd; }
.panel-foot { position: relative; color: #cfcfcf; }
.panel-foot svg { position: absolute; top: -1px; opacity: .7; }
.swfoot { height: 18px; border-bottom: 1px solid #3b3b3b; box-sizing: border-box; }
.sf0 { left: 6px; }
.sf1 { left: 34px; }
.sf2 { left: 84px; }
.sf3 { left: 109px; opacity: .25 !important; }
.sf4 { left: 134px; }
.sf5 { left: 159px; opacity: .25 !important; }
.sf6 { left: 181px; opacity: .25 !important; }
.layers-tabs { height: 15px; }
.layers {
  margin: 6px 4px 0 3px;
  height: 418px;
  box-sizing: border-box;
  border: 1px solid #3b3b3b;
  background: #4a4a4a;
}
.layer-row {
  height: 18px;
  display: flex;
  align-items: center;
  border-bottom: 1px solid #414141;
  position: relative;
}
.eye { margin-left: 3px; }
.lsep { width: 1px; height: 17px; background: #3c3c3c; margin-left: 4px; }
.layer-color { width: 2px; height: 16px; background: #4f6fdc; margin-left: 18px; }
.tri-right { margin-left: 7px; border: 4px solid transparent; border-left: 6px solid #ddd; border-right: 0; }
.layer-thumb { margin-left: 7px; }
.layer-name { margin-left: 6px; color: #cccccc; }
.target { position: absolute; left: 185px; top: 5px; width: 6px; height: 6px; border: 1px solid #bbb; border-radius: 50%; }
.sel-sq { position: absolute; left: 200px; top: 5px; width: 6px; height: 6px; background: #3e56d6; border: 1px solid #9ab; }
.layfoot { height: 21px; margin-top: 1px; }
.lcount { position: absolute; left: 4px; top: 5px; color: #cccccc; }
.layfoot svg { top: 3px; }
.lf0 { left: 86px; opacity: 1 !important; }
.lf1 { left: 109px; opacity: .25 !important; }
.lf2 { left: 135px; opacity: .3 !important; }
.lf3 { left: 158px; opacity: .9 !important; }
.lf4 { left: 183px; opacity: .25 !important; }
.grip.bottom { margin-top: 2px; background: repeating-linear-gradient(90deg, #181818 0 1px, #666 1px 2px); }

/* align panel */
.alignpanel {
  position: absolute;
  left: 776px;
  top: 566px;
  width: 217px;
  height: 122px;
  background: #4e4e4e;
  border-top: 2px solid #1c1c1c;
  box-sizing: border-box;
}
.align-tabs { height: 17px; background: #3a3a3a; }
.align-tabs .tab { line-height: 17px; background: #3a3a3a; }
.align-tabs .tab.on { background: #535353; font-weight: bold; padding: 0 6px 0 2px; margin-left: -4px; width: 40px; box-sizing: border-box; }
.align-tabs em { font-style: normal; color: #aaa; margin-right: 2px; font-size: 9px; }
.align-tabs .pf { margin-left: 3px; }
.more { position: absolute; left: 179px; top: 3px; font-size: 8px; letter-spacing: -1px; color: #ccc; }
.align-tabs .panel-menu { position: absolute; right: 5px; top: 5px; margin: 0; }
.al-title { margin: 5px 0 0 5px; height: 12px; line-height: 12px; color: #c4c4c4; }
.al-title.second { margin-top: 15px; }
.al-row { display: flex; gap: 28px; margin: 9px 0 0 9px; color: #c8c8c8; }
.al-g { display: flex; gap: 16px; }
</style>
